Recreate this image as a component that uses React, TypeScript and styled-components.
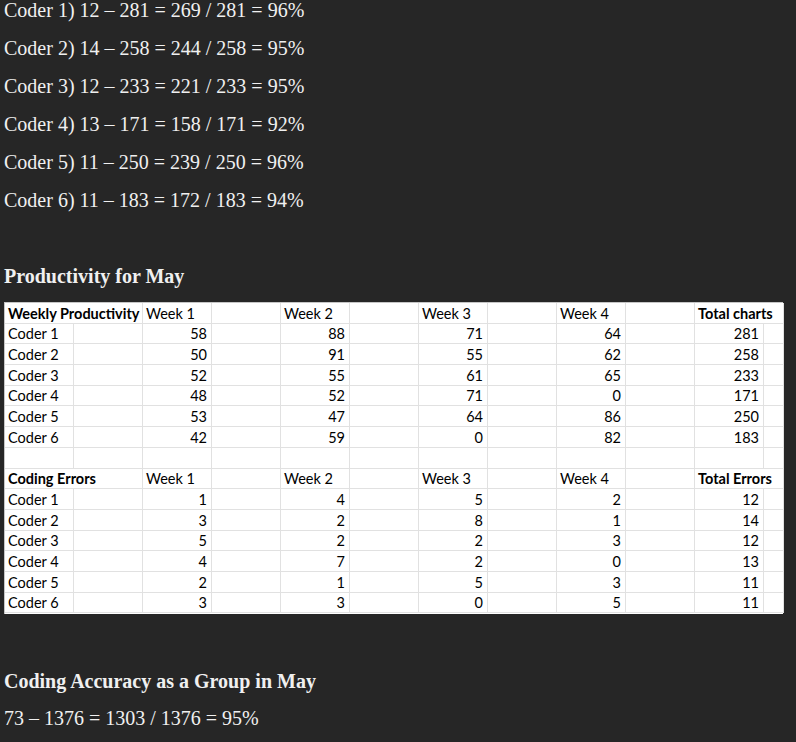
import React from "react";
import styled, { createGlobalStyle } from "styled-components";

const GlobalStyle = createGlobalStyle`
  html, body {
    margin: 0;
    padding: 0;
    background: #262626;
  }
`;

const Page = styled.div`
  padding: 0 0 0 4px;
  font-family: "Liberation Serif", "Times New Roman", serif;
  color: #f0f0f0;
`;

const Line = styled.p<{ $gap?: number }>`
  margin: 0 0 ${(p) => (p.$gap ?? 18)}px 0;
  font-size: 20px;
  line-height: 20px;
`;

const Heading = styled.h2<{ $top: number; $gap: number }>`
  margin: ${(p) => p.$top}px 0 ${(p) => p.$gap}px 0;
  font-size: 20px;
  line-height: 20px;
  font-weight: bold;
`;

const Sheet = styled.div`
  display: grid;
  grid-template-columns: repeat(11, 69px) 20px;
  grid-auto-rows: 20.7px;
  width: 779px;
  box-sizing: border-box;
  background: #ffffff;
  border-top: 1px solid #c6c6c6;
  border-left: 1px solid #c6c6c6;
  padding-bottom: 1px;
  font-family: Lato, "Open Sans", sans-serif;
  font-size: 14.5px;
  color: #000;
`;

const Cell = styled.div<{ $right?: boolean; $bold?: boolean; $span?: number }>`
  grid-column: span ${(p) => p.$span ?? 1};
  display: flex;
  align-items: flex-end;
  justify-content: ${(p) => (p.$right ? "flex-end" : "flex-start")};
  box-sizing: border-box;
  padding: 0 ${(p) => (p.$right ? 4 : 2)}px 2px ${(p) => (p.$right ? 2 : 3)}px;
  border-right: 1px solid #e1e1e1;
  border-bottom: 1px solid #e1e1e1;
  font-weight: ${(p) => (p.$bold ? 700 : 400)};
  line-height: 15px;
  white-space: nowrap;
  overflow: visible;
`;

type Block = { title: string; total: string; rows: [string, number, number, number, number, number][] };

const productivity: Block = {
  title: "Weekly Productivity",
  total: "Total charts",
  rows: [
    ["Coder 1", 58, 88, 71, 64, 281],
    ["Coder 2", 50, 91, 55, 62, 258],
    ["Coder 3", 52, 55, 61, 65, 233],
    ["Coder 4", 48, 52, 71, 0, 171],
    ["Coder 5", 53, 47, 64, 86, 250],
    ["Coder 6", 42, 59, 0, 82, 183],
  ],
};

const errors: Block = {
  title: "Coding Errors",
  total: "Total Errors",
  rows: [
    ["Coder 1", 1, 4, 5, 2, 12],
    ["Coder 2", 3, 2, 8, 1, 14],
    ["Coder 3", 5, 2, 2, 3, 12],
    ["Coder 4", 4, 7, 2, 0, 13],
    ["Coder 5", 2, 1, 5, 3, 11],
    ["Coder 6", 3, 3, 0, 5, 11],
  ],
};

const summary = [
  "Coder 1) 12 – 281 = 269 / 281 = 96%",
  "Coder 2) 14 – 258 = 244 / 258 = 95%",
  "Coder 3) 12 – 233 = 221 / 233 = 95%",
  "Coder 4) 13 – 171 = 158 / 171 = 92%",
  "Coder 5) 11 – 250 = 239 / 250 = 96%",
  "Coder 6) 11 – 183 = 172 / 183 = 94%",
];

function BlockRows({ block, id }: { block: Block; id: string }) {
  const cells: React.ReactNode[] = [];
  cells.push(
    <Cell key={`${id}-h-title`} $bold $span={2}>
      {block.title}
    </Cell>
  );
  [1, 2, 3, 4].forEach((w) => {
    cells.push(<Cell key={`${id}-h-w${w}`}>Week {w}</Cell>);
    cells.push(<Cell key={`${id}-h-e${w}`} />);
  });
  cells.push(
    <Cell key={`${id}-h-total`} $bold $span={2}>
      {block.total}
    </Cell>
  );
  block.rows.forEach((r, i) => {
    cells.push(<Cell key={`${id}-${i}-n`}>{r[0]}</Cell>);
    cells.push(<Cell key={`${id}-${i}-ne`} />);
    for (let k = 1; k <= 5; k++) {
      cells.push(
        <Cell key={`${id}-${i}-v${k}`} $right>
          {r[k]}
        </Cell>
      );
      cells.push(<Cell key={`${id}-${i}-e${k}`} />);
    }
  });
  return <>{cells}</>;
}

function EmptyRow() {
  return (
    <>
      {Array.from({ length: 12 }).map((_, i) => (
        <Cell key={`empty-${i}`} />
      ))}
    </>
  );
}

export default function App() {
  return (
    <>
      <GlobalStyle />
      <Page>
        {summary.map((s, i) => (
          <Line key={i} $gap={i === summary.length - 1 ? 0 : 18}>
            {s}
          </Line>
        ))}
        <Heading $top={56} $gap={16}>
          Productivity for May
        </Heading>
        <Sheet>
          <BlockRows block={productivity} id="p" />
          <EmptyRow />
          <BlockRows block={errors} id="e" />
        </Sheet>
        <Heading $top={57} $gap={17}>
          Coding Accuracy as a Group in May
        </Heading>
        <Line $gap={0}>73 – 1376 = 1303 / 1376 = 95%</Line>
      </Page>
    </>
  );
}
